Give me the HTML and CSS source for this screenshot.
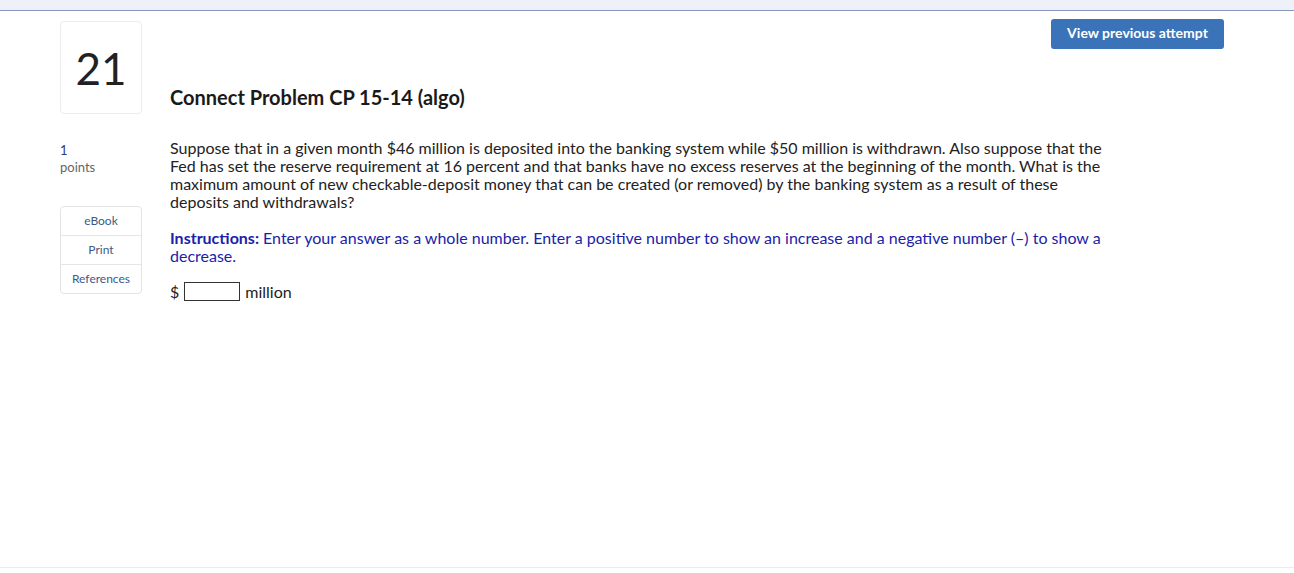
FILE: index.html
```html
<!DOCTYPE html>
<html>
<head>
<meta charset="utf-8">
<link rel="stylesheet" href="styles.css">
</head>
<body>
<div class="topbar"></div>
<div class="page">
  <aside class="side">
    <div class="qnum">21</div>
    <div class="points"><span class="pnum">1</span><span class="plabel">points</span></div>
    <ul class="links">
      <li>eBook</li>
      <li>Print</li>
      <li>References</li>
    </ul>
  </aside>
  <main class="main">
    <div class="head">
      <h1 class="title">Connect Problem CP 15-14 (algo)</h1>
      <button class="btn">View previous attempt</button>
    </div>
    <p class="question">Suppose that in a given month $46 million is deposited into the banking system while $50 million is withdrawn. Also suppose that the Fed has set the reserve requirement at 16 percent and that banks have no excess reserves at the beginning of the month. What is the maximum amount of new checkable-deposit money that can be created (or removed) by the banking system as a result of these deposits and withdrawals?</p>
    <p class="instr"><b>Instructions:</b> Enter your answer as a whole number. Enter a positive number to show an increase and a negative number (–) to show a decrease.</p>
    <div class="answer"><span>$</span><span class="input"></span><span>million</span></div>
  </main>
</div>
<div class="bottom"></div>
</body>
</html>
```
FILE: styles.css
```css
html, body { margin: 0; padding: 0; background: #fff; }
body { font-family: "Lato", "Open Sans", sans-serif; color: #222; width: 1294px; height: 573px; overflow: hidden; position: relative; }
.topbar { height: 10px; background: #eef1f7; border-bottom: 1px solid #8a97bd; }
.page { display: flex; padding-left: 60px; height: 556px; }
.side { width: 82px; flex: none; display: flex; flex-direction: column; }
.qnum { margin-top: 10px; height: 93px; width: 82px; border: 1px solid #ececec; border-radius: 4px; display: flex; align-items: center; justify-content: center; font-size: 44px; font-weight: 400; color: #222; box-sizing: border-box; }
.points { margin-top: 28px; display: flex; flex-direction: column; font-size: 13px; }
.pnum { color: #2a3a8c; line-height: 17px; }
.plabel { color: #666; line-height: 16px; }
.links { list-style: none; margin: 31px 0 0; padding: 0; border: 1px solid #e4e4e4; border-radius: 4px; width: 82px; box-sizing: border-box; }
.links li { height: 28px; line-height: 28px; text-align: center; font-size: 12px; color: #3b5a8a; border-bottom: 1px solid #e6e6e6; }
.links li:last-child { border-bottom: none; }
.main { flex: 1; padding-left: 28px; padding-right: 70px; }
.head { display: flex; justify-content: space-between; align-items: flex-start; }
.title { margin: 74px 0 0; font-size: 20px; font-weight: 700; color: #1a1a1a; line-height: 24px; }
.btn { margin-top: 8px; background: #3b73b9; color: #fff; border: none; border-radius: 3px; font-family: inherit; font-weight: 700; font-size: 14px; width: 173px; height: 30px; padding: 0 0 3px; }
.question { margin: 30px 0 0; font-size: 16px; line-height: 18px; color: #222; max-width: 935px; }
.instr { margin: 18px 0 0; font-size: 16px; line-height: 18px; color: #1b22a8; max-width: 940px; }
.instr b { font-weight: 700; }
.answer { margin-top: 17px; display: flex; align-items: center; gap: 5px; font-size: 16px; color: #222; }
.input { display: inline-block; width: 54px; height: 17px; border: 1px solid #333; }
.bottom { position: absolute; left: 0; right: 0; top: 567px; height: 1px; background: #ececec; }
```
